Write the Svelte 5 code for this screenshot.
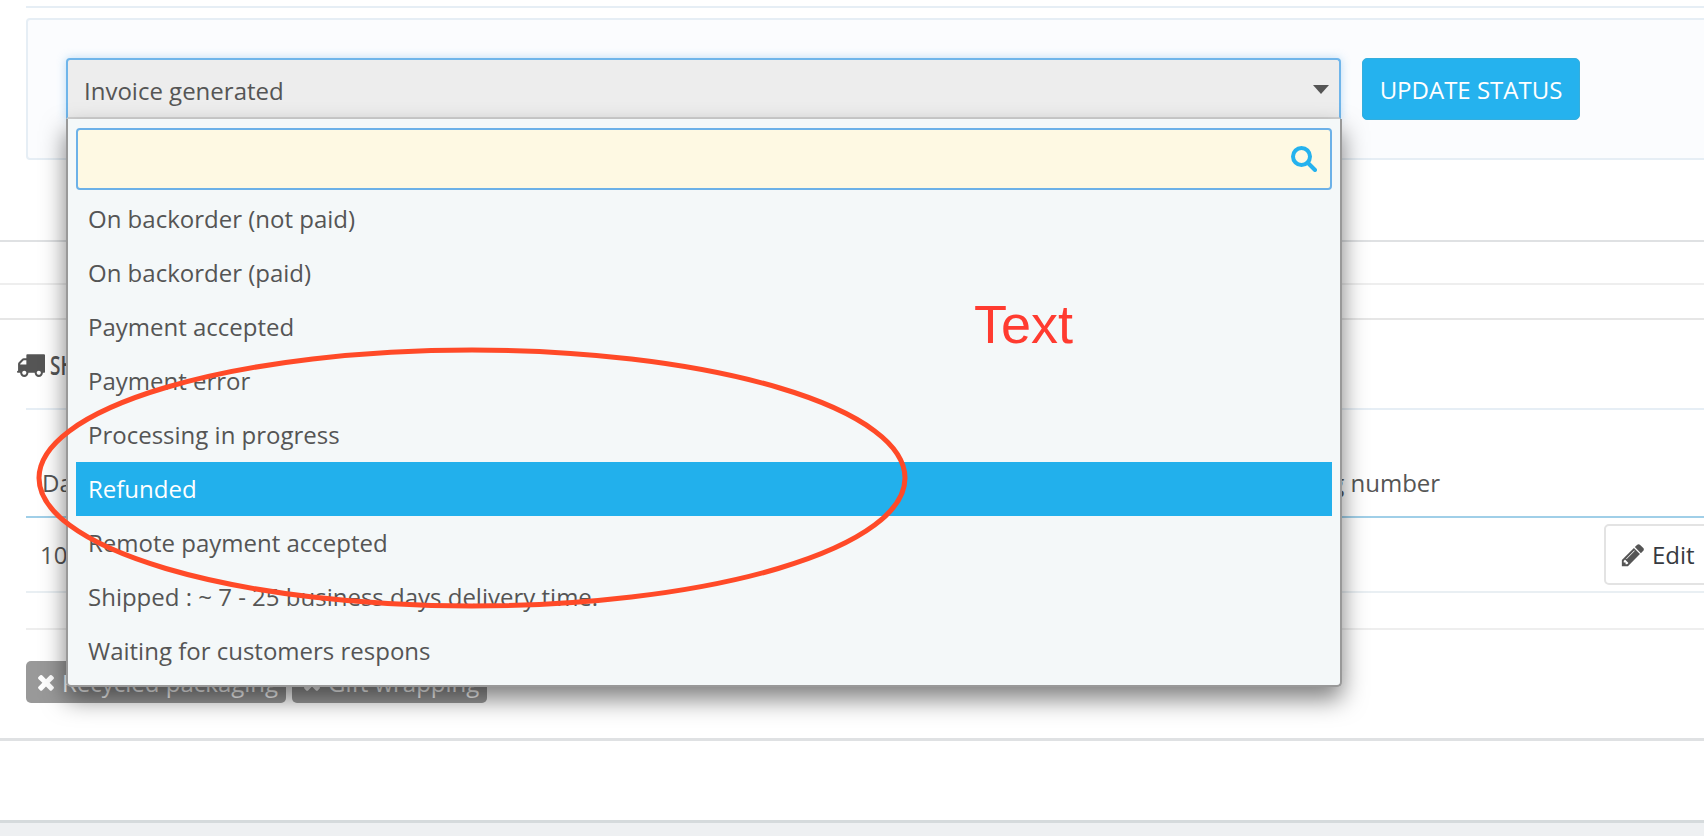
<script>
  const statuses = [
    'On backorder (not paid)',
    'On backorder (paid)',
    'Payment accepted',
    'Payment error',
    'Processing in progress',
    'Refunded',
    'Remote payment accepted',
    'Shipped : ~ 7 - 25 business days delivery time.',
    'Waiting for customers respons'
  ];
  const selected = 'Refunded';
  const truck = 'M640 1408q0-52-38-90t-90-38-90 38-38 90 38 90 90 38 90-38 38-90zm-384-512h384v-256h-158q-13 0-22 9l-195 195q-9 9-9 22v30zm1280 512q0-52-38-90t-90-38-90 38-38 90 38 90 90 38 90-38 38-90zm256-1088v1024q0 15-4 26.5t-13.5 18.5-16.5 11.5-23.5 6-22.5 2-25.5 0-22.5-.5q0 106-75 181t-181 75-181-75-75-181h-384q0 106-75 181t-181 75-181-75-75-181h-64q-3 0-22.5.5t-25.5 0-22.5-2-23.5-6-16.5-11.5-13.5-18.5-4-26.5q0-26 19-45t45-19v-320q0-8-.5-35t0-38 2.5-34.5 6.5-37 14-30.5 22.5-30l198-198q19-19 50.5-32t58.5-13h160v-192q0-26 19-45t45-19h1024q26 0 45 19t19 45z';
  const pencil = 'M491 1536l91-91-235-235-91 91v107h128v128h107zm523-928q0-22-22-22-10 0-17 7l-542 542q-7 7-7 17 0 22 22 22 10 0 17-7l542-542q7-7 7-17zm-54-192l416 416-832 832h-416v-416zm683 96q0 53-37 90l-166 166-416-416 166-165q36-38 90-38 53 0 91 38l235 234q37 39 37 91z';
  const times = 'M1490 1322q0 40-28 68l-136 136q-28 28-68 28t-68-28l-294-294-294 294q-28 28-68 28t-68-28l-136-136q-28-28-28-68t28-68l294-294-294-294q-28-28-28-68t28-68l136-136q28-28 68-28t68 28l294 294 294-294q28-28 68-28t68 28l136 136q28 28 28 68t-28 68l-294 294 294 294q28 28 28 68z';
</script>

<div class="page">
  <section class="status">
    <div class="rule"></div>
    <div class="status-card">
      <div class="select">
        <span>Invoice generated</span>
        <i class="arrow"></i>
        <div class="dropdown">
          <div class="search">
            <svg viewBox="0 0 26 26" width="26" height="26">
              <circle cx="10.5" cy="10.5" r="8.5" fill="none" stroke="#25b2ee" stroke-width="4" />
              <line x1="17" y1="17" x2="24" y2="24" stroke="#25b2ee" stroke-width="4" stroke-linecap="round" />
            </svg>
          </div>
          <ul>
            {#each statuses as status}
              <li class:active={status === selected}>{status}</li>
            {/each}
          </ul>
        </div>
      </div>
      <button class="update">UPDATE STATUS</button>
    </div>
  </section>

  <div class="gap"></div>

  <section class="shipping">
    <div class="tabs"></div>
    <h4>
      <svg viewBox="0 0 1792 1792" width="29" height="29"><path d={truck} /></svg>
      <span>SHIPPING</span>
    </h4>
    <div class="head">
      <span>Date</span>
      <span>Tracking number</span>
    </div>
    <div class="row">
      <span>10</span>
      <button class="edit">
        <svg viewBox="0 0 1792 1792" width="26" height="26"><path d={pencil} /></svg>
        Edit
      </button>
    </div>
    <div class="row-end"></div>
    <div class="badges">
      <span class="badge">
        <svg viewBox="0 0 1792 1792" width="24" height="24"><path d={times} /></svg>
        Recycled packaging
      </span>
      <span class="badge">
        <svg viewBox="0 0 1792 1792" width="24" height="24"><path d={times} /></svg>
        Gift wrapping
      </span>
    </div>
  </section>

  <div class="footer-gap"></div>

  <div class="note">Text</div>
  <svg class="circle" viewBox="0 0 880 268" width="880" height="268">
    <ellipse cx="440" cy="134" rx="433" ry="128" fill="none" stroke="#ff4a28" stroke-width="5" />
  </svg>
</div>

<style>
  :global(body) {
    margin: 0;
    background: #eef0f2;
    overflow: hidden;
  }

  .page {
    position: relative;
    width: 1704px;
    height: 836px;
    overflow: hidden;
    font-family: "Open Sans", sans-serif;
    font-size: 24px;
    color: #555;
  }

  .status {
    box-sizing: content-box;
    height: 234px;
    padding-top: 6px;
    padding-left: 26px;
    background: #fff;
    border-bottom: 2px solid #dfe1e3;
  }

  .rule {
    height: 2px;
    margin-bottom: 10px;
    background: #e6eef5;
  }

  .status-card {
    box-sizing: border-box;
    width: 1700px;
    height: 142px;
    padding: 38px 0 0 38px;
    display: flex;
    align-items: flex-start;
    gap: 21px;
    background: #fbfcfe;
    border: 2px solid #e6eef5;
    border-radius: 4px;
  }

  .select {
    position: relative;
    box-sizing: border-box;
    width: 1275px;
    height: 61px;
    padding: 3px 16px 0;
    display: flex;
    align-items: center;
    justify-content: space-between;
    background: #ededed;
    border: 2px solid #6fb5ea;
    border-bottom-color: #d3d3d3;
    border-radius: 4px 4px 0 0;
    box-shadow: 0 0 10px rgba(111, 181, 234, .45);
  }

  .arrow {
    width: 0;
    height: 0;
    margin-top: -2px;
    margin-right: -6px;
    border: 8px solid transparent;
    border-top: 9px solid #555;
    border-bottom: 0;
  }

  .dropdown {
    position: absolute;
    left: -2px;
    top: calc(100% + 2px);
    box-sizing: border-box;
    width: 1276px;
    height: 568px;
    padding: 9px 8px 8px;
    background: #f4f8f9;
    border: 2px solid #999;
    border-top: 0;
    border-radius: 0 0 5px 5px;
    box-shadow: 0 12px 24px rgba(0, 0, 0, .5);
    z-index: 2;
  }

  .search {
    box-sizing: border-box;
    height: 62px;
    margin-bottom: 2px;
    padding-right: 13px;
    display: flex;
    align-items: center;
    justify-content: flex-end;
    background: #fef9e3;
    border: 2px solid #6cb1e8;
    border-radius: 4px;
  }

  ul {
    list-style: none;
    margin: 0;
    padding: 0;
  }

  li {
    height: 54px;
    padding-left: 12px;
    line-height: 54px;
    white-space: nowrap;
  }

  li.active {
    background: #22b0ec;
    color: #fff;
  }

  .update {
    width: 218px;
    height: 62px;
    padding: 0;
    background: #25b2ee;
    border: 1px solid #35aedd;
    border-radius: 5px;
    color: #fff;
    font: 24px "Open Sans", sans-serif;
  }

  .gap {
    height: 41px;
    background: #fff;
    border-bottom: 2px solid #eee;
  }

  .shipping {
    height: 456px;
    box-sizing: border-box;
    background: #fff;
    border-bottom: 3px solid #dfe1e3;
  }

  .tabs {
    height: 33px;
    border-bottom: 2px solid #e6e6e6;
  }

  h4 {
    display: flex;
    align-items: center;
    gap: 5px;
    height: 88px;
    margin: 0 0 0 16px;
    font-size: 27px;
    font-weight: 600;
    color: #555;
  }

  h4 svg {
    fill: #555;
  }

  h4 span {
    transform: scaleX(.7);
    transform-origin: left;
  }

  .head {
    display: grid;
    grid-template-columns: 1208px 1fr;
    align-items: center;
    height: 110px;
    margin-left: 26px;
    padding: 38px 14px 0 16px;
    box-sizing: border-box;
    border-top: 2px solid #e6eef5;
    border-bottom: 2px solid #a0cfe8;
    white-space: nowrap;
  }

  .row {
    display: flex;
    justify-content: space-between;
    align-items: center;
    box-sizing: border-box;
    height: 75px;
    margin-left: 26px;
    padding-left: 14px;
    border-bottom: 2px solid #e9eff3;
  }

  .edit {
    display: flex;
    align-items: center;
    gap: 6px;
    flex: none;
    width: 120px;
    height: 61px;
    margin-right: -20px;
    padding: 0 0 0 14px;
    background: #fff;
    border: 2px solid #e3e3e3;
    border-radius: 5px;
    color: #363a41;
    font: 24px "Open Sans", sans-serif;
  }

  .edit svg {
    fill: #555;
  }

  .row-end {
    height: 35px;
    margin-left: 26px;
    border-bottom: 2px solid #eee;
  }

  .badges {
    display: flex;
    gap: 6px;
    margin: 31px 0 0 26px;
  }

  .badge {
    display: flex;
    align-items: center;
    gap: 4px;
    height: 42px;
    padding: 0 8px;
    background: #999;
    border-radius: 5px;
    color: #fff;
    font-size: 24px;
    white-space: nowrap;
  }

  .badge svg {
    fill: #fff;
  }

  .footer-gap {
    height: 79px;
    background: #fff;
    border-bottom: 3px solid #d5dadc;
  }

  /* annotation drawn over the screenshot */
  .note {
    position: absolute;
    left: 974px;
    top: 293px;
    z-index: 3;
    color: #ff3b30;
    font: 54px "Liberation Sans", sans-serif;
  }

  .circle {
    position: absolute;
    left: 32px;
    top: 344px;
    z-index: 3;
  }
</style>
